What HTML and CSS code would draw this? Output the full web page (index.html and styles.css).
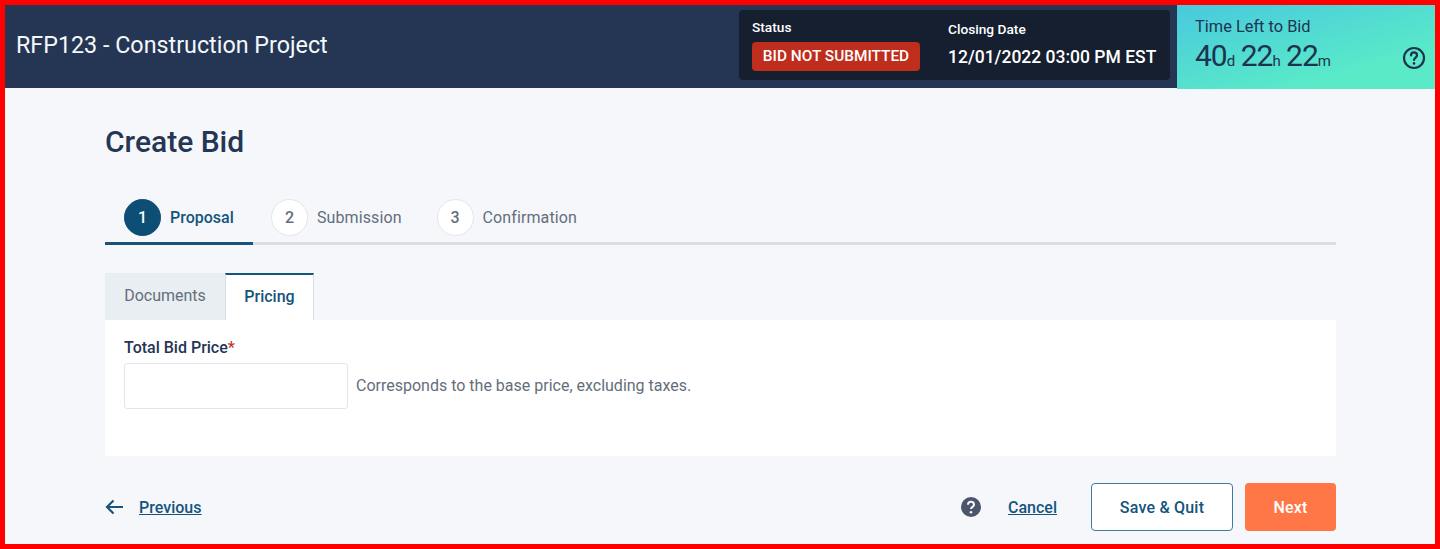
FILE: index.html
```html
<!DOCTYPE html>
<html lang="en">
<head>
    <meta charset="UTF-8">
    <title>Create Bid</title>
    <link rel="stylesheet" href="styles.css">
</head>
<body>
    <div class="frame">
        <header class="top-bar">
            <div class="project-title">RFP123 - Construction Project</div>
            <div class="bid-info">
                <div class="info-status">
                    <div class="info-label">Status</div>
                    <div class="status-badge">BID NOT SUBMITTED</div>
                </div>
                <div class="info-closing">
                    <div class="info-label">Closing Date</div>
                    <div class="closing-date">12/01/2022 03:00 PM EST</div>
                </div>
            </div>
            <div class="time-left">
                <div class="time-title">Time Left to Bid</div>
                <div class="time-value">40<small>d</small> 22<small>h</small> 22<small>m</small></div>
                <svg class="time-help" viewBox="0 0 24 24" width="24" height="24" fill="none" stroke="#1f3350" stroke-width="2.2">
                    <circle cx="12" cy="12" r="10"></circle>
                    <path d="M9 9.4a3 3 0 0 1 6 0c0 2-3 2.4-3 4.6" stroke-linecap="round"></path>
                    <circle cx="12" cy="17.4" r="1.3" fill="#1f3350" stroke="none"></circle>
                </svg>
            </div>
        </header>

        <main class="content">
            <h1 class="page-title">Create Bid</h1>

            <div class="stepper">
                <div class="step step-active">
                    <span class="step-num">1</span>
                    <span class="step-name">Proposal</span>
                </div>
                <div class="step">
                    <span class="step-num">2</span>
                    <span class="step-name">Submission</span>
                </div>
                <div class="step">
                    <span class="step-num">3</span>
                    <span class="step-name">Confirmation</span>
                </div>
            </div>

            <div class="tabs">
                <div class="tab">Documents</div>
                <div class="tab tab-active">Pricing</div>
            </div>

            <div class="panel">
                <label class="field-label">Total Bid Price<span class="required">*</span></label>
                <div class="field-row">
                    <input type="text" class="price-input">
                    <span class="field-hint">Corresponds to the base price, excluding taxes.</span>
                </div>
            </div>

            <div class="actions">
                <a class="prev-link" href="#">
                    <svg viewBox="0 0 18 16" width="18" height="16" fill="none" stroke="#1b5479" stroke-width="2.2">
                        <path d="M18 8H2M8.5 1.5L2 8l6.5 6.5"></path>
                    </svg>
                    <span>Previous</span>
                </a>
                <div class="actions-right">
                    <svg class="help-icon" viewBox="0 0 20 20" width="20" height="20">
                        <circle cx="10" cy="10" r="10" fill="#4b566b"></circle>
                        <path d="M7 7.8a3 3 0 0 1 6 0c0 2-3 2.2-3 4.2" fill="none" stroke="#f5f7fb" stroke-width="2"></path>
                        <circle cx="10" cy="15.2" r="1.3" fill="#f5f7fb"></circle>
                    </svg>
                    <a class="cancel-link" href="#">Cancel</a>
                    <button class="btn btn-outline">Save &amp; Quit</button>
                    <button class="btn btn-primary">Next</button>
                </div>
            </div>
        </main>
    </div>
</body>
</html>
```

FILE: styles.css
```css
/* Basic reset */
* {
    margin: 0;
    padding: 0;
    box-sizing: border-box;
    font-family: Roboto, Arial, sans-serif;
}

html, body {
    height: 100%;
}

.frame {
    height: 549px;
    border: 5px solid #ff0000;
    background-color: #f5f7fb;
    display: flex;
    flex-direction: column;
    overflow: hidden;
}

/* Header bar */
.top-bar {
    height: 83px;
    flex-shrink: 0;
    display: flex;
    align-items: flex-start;
    background-color: #243654;
}

.project-title {
    flex: 1;
    padding: 27px 0 0 11px;
    font-size: 23.3px;
    line-height: 26px;
    color: #f4f8fb;
}

.bid-info {
    width: 431px;
    height: 70px;
    margin: 5px 7px 0 0;
    padding: 8px 0 0 13px;
    display: flex;
    background-color: #161f30;
    border-radius: 4px;
    color: #fff;
}

.info-status {
    width: 196px;
}

.info-label {
    font-size: 13.7px;
    font-weight: 500;
    line-height: 18px;
}

.info-closing .info-label {
    margin-top: 2px;
}

.status-badge {
    width: 168px;
    height: 29px;
    margin-top: 6px;
    background-color: #bf2d1d;
    border-radius: 4px;
    font-size: 15.4px;
    font-weight: 500;
    line-height: 29px;
    text-align: center;
}

.closing-date {
    margin-top: 7px;
    font-size: 17.5px;
    font-weight: 500;
    line-height: 24px;
    white-space: nowrap;
}

.time-left {
    position: relative;
    width: 258px;
    height: 84px;
    padding: 13px 0 0 18px;
    background: linear-gradient(165deg, #48c9de 0%, #5aeac8 75%);
    color: #1f3350;
}

.time-title {
    font-size: 16.4px;
    line-height: 18px;
}

.time-value {
    margin-top: 3px;
    font-size: 30px;
    letter-spacing: -1px;
    word-spacing: -1px;
    line-height: 33px;
    white-space: nowrap;
}

.time-value small {
    font-size: 15px;
    letter-spacing: 0;
}

.time-help {
    position: absolute;
    right: 9px;
    top: 41px;
}

/* Main area */
.content {
    flex: 1;
    padding: 0 99px 0 100px;
}

.page-title {
    margin-top: 37px;
    font-size: 30px;
    font-weight: 500;
    line-height: 33px;
    color: #243654;
}

/* Stepper */
.stepper {
    margin-top: 41px;
    height: 46px;
    display: flex;
    gap: 18px;
    border-bottom: 3px solid #d8dee2;
}

.step {
    display: flex;
    align-items: flex-start;
    gap: 9px;
    padding: 0 17px 0 0;
    height: 46px;
    font-size: 16px;
    letter-spacing: 0.1px;
    color: #646e7b;
}

.step-active {
    width: 148px;
    padding: 0 0 0 19px;
    border-bottom: 3px solid #15547b;
    color: #15547b;
    font-weight: 500;
    letter-spacing: 0;
}

.step-num {
    width: 37px;
    height: 37px;
    background-color: #fff;
    border: 1px solid #e2e6ea;
    border-radius: 50%;
    font-size: 16px;
    font-weight: 500;
    line-height: 35px;
    text-align: center;
}

.step-active .step-num {
    background-color: #0d4e75;
    border-color: #0d4e75;
    color: #fff;
}

.step-name {
    line-height: 37px;
}

/* Tabs */
.tabs {
    margin-top: 28px;
    height: 47px;
    display: flex;
}

.tab {
    width: 120px;
    padding-top: 1px;
    font-size: 16px;
    line-height: 44px;
    text-align: center;
    color: #646e7b;
    background-color: #e8eef1;
}

.tab-active {
    width: 89px;
    padding-top: 0;
    background-color: #fff;
    border-top: 2px solid #15547b;
    border-right: 1px solid #d8dee5;
    border-left: 1px solid #d8dee5;
    color: #15547b;
    font-weight: 500;
}

/* Form panel */
.panel {
    height: 136px;
    padding: 19px 19px 0;
    background-color: #fff;
}

.field-label {
    display: block;
    font-size: 16px;
    font-weight: 500;
    line-height: 18px;
    color: #243654;
}

.required {
    color: #c9302c;
}

.field-row {
    margin-top: 6px;
    display: flex;
    align-items: center;
    gap: 8px;
}

.price-input {
    width: 224px;
    height: 46px;
    background-color: #fff;
    border: 1px solid #e2e6ea;
    border-radius: 3px;
    outline: none;
}

.field-hint {
    margin-bottom: 2px;
    font-size: 16px;
    color: #646e7b;
}

/* Bottom actions */
.actions {
    margin-top: 27px;
    display: flex;
    justify-content: space-between;
    align-items: center;
}

.prev-link {
    display: flex;
    align-items: center;
    gap: 16px;
    font-size: 16px;
    font-weight: 500;
    color: #15547b;
}

.prev-link span {
    text-decoration: underline;
}

.actions-right {
    display: flex;
    align-items: center;
}

.help-icon {
    margin-right: 27px;
}

.cancel-link {
    margin-right: 34px;
    font-size: 16px;
    font-weight: 500;
    color: #15547b;
}

.btn {
    height: 48px;
    border-radius: 4px;
    font-size: 16px;
    font-weight: 500;
    letter-spacing: 0.2px;
    cursor: pointer;
}

.btn-outline {
    width: 142px;
    margin-right: 12px;
    background-color: #fff;
    border: 1px solid #3f7aa0;
    color: #15547b;
}

.btn-primary {
    width: 91px;
    background-color: #ff7647;
    border: none;
    color: #fff;
}
```
